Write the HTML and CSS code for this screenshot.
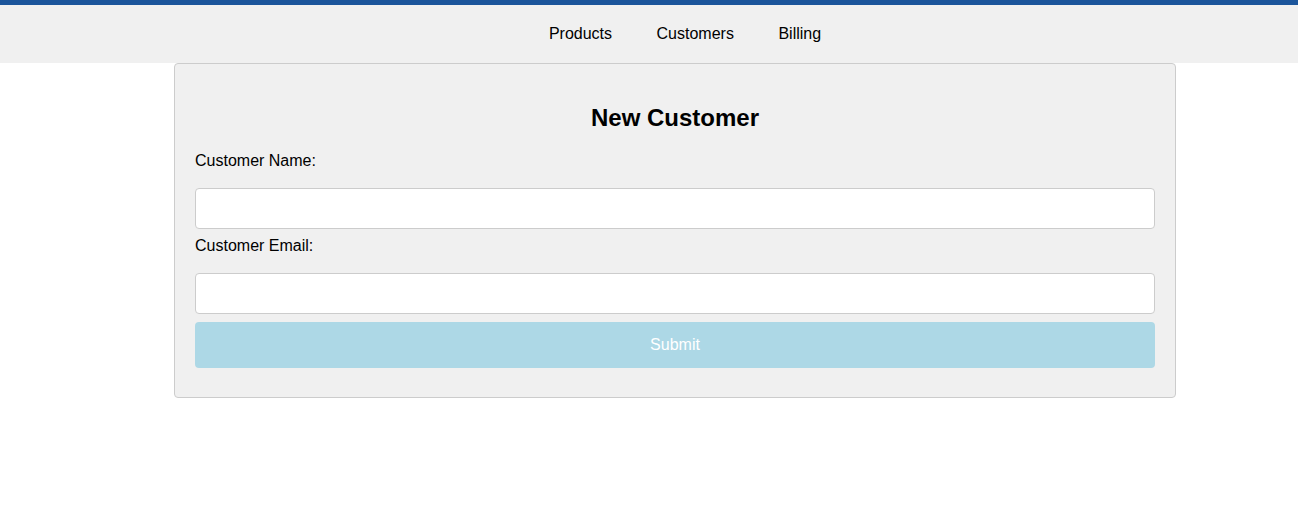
FILE: index.html
```html
<!DOCTYPE html>
<html lang="en">
<head>
<meta charset="utf-8">
<title>New Customer</title>
<link rel="stylesheet" href="styles.css">
</head>
<body>
<header class="topbar">
  <nav class="nav">
    <a class="nav-link" href="#">Products</a>
    <a class="nav-link" href="#">Customers</a>
    <a class="nav-link" href="#">Billing</a>
  </nav>
</header>
<main class="main">
  <form class="card">
    <h2 class="card-title">New Customer</h2>
    <label class="field-label" for="name">Customer Name:</label>
    <input class="field-input" id="name" type="text">
    <label class="field-label" for="email">Customer Email:</label>
    <input class="field-input" id="email" type="email">
    <button class="submit-btn" type="button">Submit</button>
  </form>
</main>
</body>
</html>
```

FILE: styles.css
```css
* { box-sizing: border-box; }
html, body {
  margin: 0;
  padding: 0;
  background: #ffffff;
  font-family: "Liberation Sans", Arial, sans-serif;
  font-size: 16px;
  color: #000;
}
.topbar {
  border-top: 5px solid #1b559b;
  background: #f0f0f0;
  height: 63px;
}
.nav {
  display: flex;
  justify-content: center;
  align-items: center;
  gap: 44.5px;
  height: 58px;
  padding-left: 72px;
  padding-bottom: 1px;
}
.nav-link {
  color: #000;
  text-decoration: none;
  line-height: 18px;
}
.main {
  padding-left: 174px;
}
.card {
  width: 1002px;
  background: #f0f0f0;
  border: 1px solid #cccccc;
  border-radius: 4px;
  padding: 20px;
  display: block;
}
.card-title {
  margin: 20px 0 20px;
  font-size: 24px;
  font-weight: bold;
  text-align: center;
  line-height: 28px;
}
.field-label {
  display: block;
  line-height: 18px;
  margin-bottom: 18px;
}
.field-input {
  display: block;
  width: 100%;
  height: 41px;
  margin: 0 0 8px;
  padding: 10px;
  border: 1px solid #cccccc;
  border-radius: 4px;
  background: #fff;
  font-family: inherit;
  font-size: 16px;
}
.submit-btn {
  display: block;
  width: 100%;
  height: 46px;
  margin: 8px 0 9px;
  border: none;
  border-radius: 4px;
  background: #add8e6;
  color: #fff;
  font-family: inherit;
  font-size: 16px;
}
```
